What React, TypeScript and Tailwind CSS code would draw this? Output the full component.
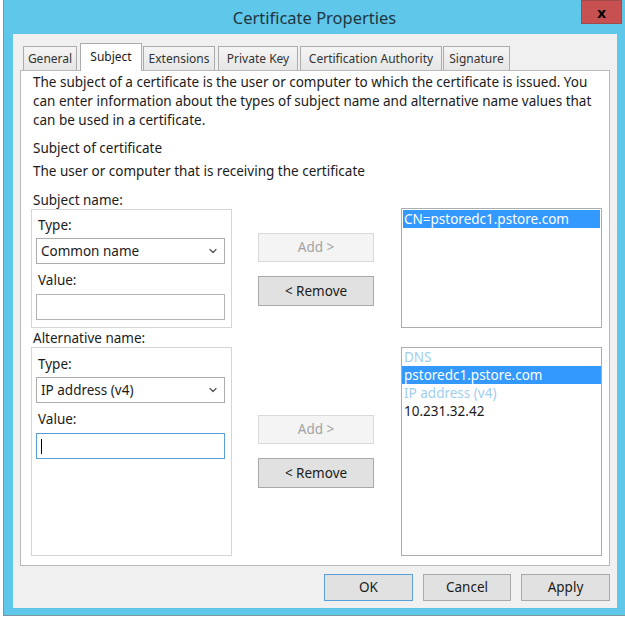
import { ChevronDown } from "lucide-react";

const tabs = [
  { label: "General", cls: "ml-0 w-[54px]" },
  { label: "Subject", cls: "ml-[3px] w-[62px]", active: true },
  { label: "Extensions", cls: "ml-[1px] w-[72px]" },
  { label: "Private Key", cls: "ml-[3px] w-[80px]" },
  { label: "Certification Authority", cls: "ml-[2px] w-[142px]" },
  { label: "Signature", cls: "ml-[1px] w-[67px]" },
];

function Select({ value }: { value: string }) {
  return (
    <div className="flex h-[26px] items-center justify-between border border-[#acacac] bg-white pl-[4px] pr-[5px]">
      <span>{value}</span>
      <ChevronDown className="h-[12px] w-[12px] text-[#555]" strokeWidth={2.5} />
    </div>
  );
}

function Field({ focused }: { focused?: boolean }) {
  return (
    <div
      className={
        focused
          ? "flex h-[26px] items-center border border-[#5a9fd8] bg-white pl-[4px]"
          : "flex h-[26px] items-center border border-[#b4b4b4] bg-white pl-[4px]"
      }
    >
      {focused && <span className="h-[15px] w-[1px] bg-black" />}
    </div>
  );
}

function AddRemove({ top }: { top: string }) {
  return (
    <div className={`flex flex-col gap-[14px] ${top}`}>
      <div className="flex h-[29px] items-center justify-center border border-[#d9d9d9] bg-[#f4f4f4] text-[#a3a3a3]">
        Add &gt;
      </div>
      <div className="flex h-[30px] items-center justify-center border border-[#a9a9a9] bg-[#e1e1e1]">
        &lt; Remove
      </div>
    </div>
  );
}

export default function App() {
  return (
    <div className="h-[619px] w-[625px] overflow-hidden bg-white font-['Noto_Sans',sans-serif] text-[13.5px] leading-[19px] text-[#1b1b1b]">
      <div className="ml-[3px] flex h-[616px] w-[622px] flex-col border-b border-l border-[#7d97a2] bg-[#5ec7ea]">
        <div className="relative flex h-[34px] items-center justify-center">
          <span className="text-[16.5px] text-[#213641]">Certificate Properties</span>
          <div className="absolute left-[577px] top-0 flex h-[24px] w-[41px] items-center justify-center border border-[#a14a4a] bg-[#c75050] text-[15px] font-bold leading-none text-black">
            x
          </div>
        </div>

        <div className="mb-[7px] ml-[9px] mr-[8px] flex flex-1 flex-col bg-[#f0f0f0]">
          <div className="ml-[10px] mt-[9px] flex h-[27px] items-end text-[12px]">
            {tabs.map((t) =>
              t.active ? (
                <div
                  key={t.label}
                  className={`${t.cls} relative z-10 -mb-[1px] flex h-[28px] items-start justify-center border border-b-0 border-[#acacac] bg-white pt-[3px]`}
                >
                  {t.label}
                </div>
              ) : (
                <div
                  key={t.label}
                  className={`${t.cls} flex h-[24px] items-center justify-center border border-b-0 border-[#acacac] bg-gradient-to-b from-[#f5f5f5] to-[#e6e6e6] text-[#333]`}
                >
                  {t.label}
                </div>
              )
            )}
          </div>

          <div className="mx-[7px] flex h-[496px] flex-col border border-[#b9b9b9] bg-white pl-[10px] pr-[7px] pt-[2px]">
            <p className="pl-[2px]">
              The subject of a certificate is the user or computer to which the certificate is issued. You
              <br />
              can enter information about the types of subject name and alternative name values that
              <br />
              can be used in a certificate.
            </p>
            <div className="mt-[9px] pl-[2px]">Subject of certificate</div>
            <div className="mt-[4px] pl-[2px]">The user or computer that is receiving the certificate</div>

            <div className="mt-[10px] grid grid-cols-[201px_26px_116px_27px_201px] grid-rows-[18px_119px_19px_209px]">
              <div className="col-span-5 pl-[2px] leading-[18px]">Subject name:</div>

              <div className="flex flex-col border border-[#d5d5d5] pl-[4px] pr-[6px] pt-[6px]">
                <div className="pl-[2px]">Type:</div>
                <div className="mt-[3px]">
                  <Select value="Common name" />
                </div>
                <div className="mt-[7px] pl-[2px]">Value:</div>
                <div className="mt-[4px]">
                  <Field />
                </div>
              </div>
              <div />
              <AddRemove top="mt-[24px]" />
              <div />
              <div className="-mt-[1px] border border-[#acacac] p-[1px]">
                <div className="h-[18px] bg-[#3399ff] pl-[1px] leading-[18px] text-white">CN=pstoredc1.pstore.com</div>
              </div>

              <div className="col-span-5 pl-[2px] pt-[1px] leading-[18px]">Alternative name:</div>

              <div className="flex flex-col border border-[#d5d5d5] pl-[4px] pr-[6px] pt-[7px]">
                <div className="pl-[2px]">Type:</div>
                <div className="mt-[3px]">
                  <Select value="IP address (v4)" />
                </div>
                <div className="mt-[7px] pl-[2px]">Value:</div>
                <div className="mt-[4px]">
                  <Field focused />
                </div>
              </div>
              <div />
              <AddRemove top="mt-[68px]" />
              <div />
              <div className="border border-[#acacac] leading-[18px]">
                <div className="pl-[2px] text-[#9fcff0]">DNS</div>
                <div className="bg-[#3399ff] pl-[2px] text-white">pstoredc1.pstore.com</div>
                <div className="pl-[2px] text-[#9fcff0]">IP address (v4)</div>
                <div className="pl-[2px]">10.231.32.42</div>
              </div>
            </div>
          </div>

          <div className="mr-[7px] mt-[8px] flex justify-end gap-[10px]">
            <div className="flex h-[27px] w-[89px] items-center justify-center border border-[#5a9fd8] bg-[#e1e1e1]">OK</div>
            <div className="flex h-[27px] w-[88px] items-center justify-center border border-[#a9a9a9] bg-[#e1e1e1]">Cancel</div>
            <div className="flex h-[27px] w-[89px] items-center justify-center border border-[#a9a9a9] bg-[#e1e1e1]">Apply</div>
          </div>
        </div>
      </div>
    </div>
  );
}
